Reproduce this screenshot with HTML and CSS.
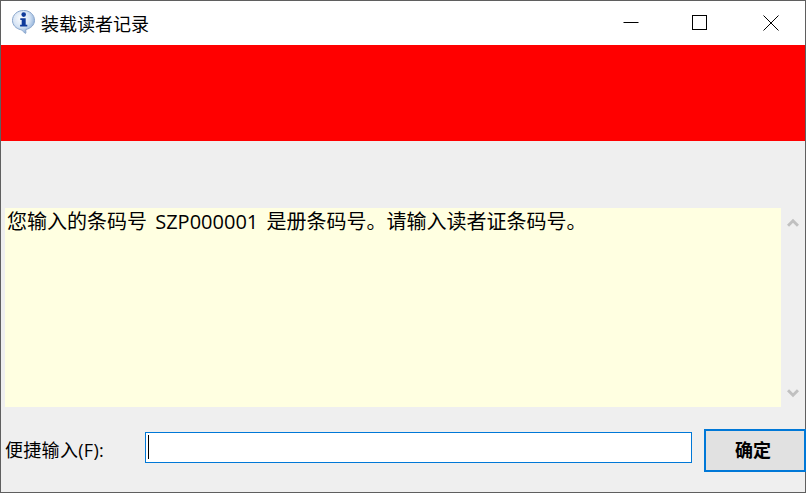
FILE: index.html
```html
<!DOCTYPE html>
<html lang="zh-CN">
<head>
    <meta charset="UTF-8">
    <title>装载读者记录</title>
    <link rel="stylesheet" href="styles.css">
</head>
<body>
    <div class="window">
        <div class="titlebar">
            <svg class="app-icon" width="26" height="26" viewBox="0 1 26 26">
                <defs>
                    <radialGradient id="bubble" cx="40%" cy="35%" r="70%">
                        <stop offset="0%" stop-color="#ffffff"/>
                        <stop offset="55%" stop-color="#d5e3f4"/>
                        <stop offset="100%" stop-color="#7fa5d4"/>
                    </radialGradient>
                </defs>
                <path d="M12.500 1.500C6.300 1.500 1.500 5.800 1.500 11.300c0 4.600 3.300 8.300 8 9.300 1 .2 2.600 1.400 4.200 3.400.6.7 1.300.4 1.200-.5-.1-1-.2-2.200-.1-3 5-1 8.700-4.600 8.700-9.200 0-5.500-4.800-9.800-10.500-9.800z" fill="url(#bubble)" stroke="#8aa6cc" stroke-width="1"/>
                <circle cx="12.700" cy="5.600" r="2.300" fill="#0f3a9a"/>
                <path d="M9.300 9.200h5.400v6.600h1.600v1.800H9.100v-1.800h1.600v-4.800H9.300z" fill="#0f3a9a"/>
            </svg>
            <span class="title">装载读者记录</span>
            <div class="window-buttons">
                <svg class="win-btn" width="16" height="16" viewBox="0 0 16 16"><path d="M0.500 7.500h15" stroke="#000" fill="none"/></svg>
                <svg class="win-btn" width="16" height="16" viewBox="0 0 16 16"><rect x="0.500" y="0.500" width="14" height="14" stroke="#000" fill="none"/></svg>
                <svg class="win-btn win-close" width="16" height="16" viewBox="0 0 16 16"><path d="M0.500 0.500l15 15M15.500 0.500l-15 15" stroke="#000" fill="none"/></svg>
            </div>
        </div>

        <div class="banner"></div>

        <div class="message-row">
            <div class="message">您输入的条码号 SZP000001 是册条码号。请输入读者证条码号。</div>
            <div class="scrollbar">
                <svg width="12" height="9" viewBox="0 0 12 9"><path d="M1 7.800l5-5 5 5" stroke="#c0c0c0" stroke-width="3" fill="none"/></svg>
                <svg width="12" height="9" viewBox="0 0 12 9"><path d="M1 1.200l5 5 5-5" stroke="#c0c0c0" stroke-width="3" fill="none"/></svg>
            </div>
        </div>

        <div class="input-row">
            <label class="input-label" for="quickInput">便捷输入(F):</label>
            <div class="input-box">
                <input type="text" id="quickInput">
                <span class="caret"></span>
            </div>
            <button class="ok-button">确定</button>
        </div>
    </div>
</body>
</html>
```

FILE: styles.css
```css
* {
    margin: 0;
    padding: 0;
    box-sizing: border-box;
}

body {
    width: 806px;
    height: 493px;
    overflow: hidden;
    font-family: "Open Sans", "Noto Sans CJK SC", sans-serif;
    color: #000;
}

.window {
    width: 806px;
    height: 493px;
    display: flex;
    flex-direction: column;
    background: #efefef;
    border: 1px solid #5f5f5f;
}

.titlebar {
    height: 44px;
    flex: none;
    display: flex;
    align-items: center;
    background: #fff;
    padding-left: 10px;
}

.app-icon {
    margin-right: 4px;
}

.title {
    font-size: 18px;
}

.window-buttons {
    margin-left: auto;
    display: flex;
    gap: 53px;
    padding-right: 26px;
}

.win-btn {
    display: block;
}

.win-close {
    margin-left: 2px;
}

.banner {
    height: 96px;
    flex: none;
    background: #f00;
}

.message-row {
    display: flex;
    height: 199px;
    flex: none;
    margin-top: 67px;
    padding-left: 4px;
}

.message {
    width: 776px;
    background: #ffffe1;
    padding: 2px;
    font-size: 20px;
    line-height: 23px;
    word-spacing: 3px;
}

.scrollbar {
    flex: 1;
    display: flex;
    flex-direction: column;
    justify-content: space-between;
    align-items: center;
    padding: 10px 0 9px;
}

.scrollbar svg {
    display: block;
}

.input-row {
    display: flex;
    align-items: flex-start;
    margin-top: 22px;
    padding-left: 4px;
}

.input-label {
    width: 140px;
    flex: none;
    font-size: 18px;
    line-height: 24px;
    margin-top: 9px;
    letter-spacing: 0.3px;
}

.input-box {
    position: relative;
    width: 547px;
    height: 31px;
    margin-top: 3px;
    flex: none;
}

.input-box input {
    width: 100%;
    height: 100%;
    border: 1px solid #0078d7;
    background: #fff;
    outline: none;
}

.caret {
    position: absolute;
    left: 3px;
    top: 3px;
    width: 1px;
    height: 24px;
    background: #000;
}

.ok-button {
    width: 102px;
    height: 43px;
    margin-left: 12px;
    padding: 0 4px 3px 0;
    flex: none;
    border: 2px solid #0078d7;
    background: #e1e1e1;
    font-family: inherit;
    font-size: 18px;
    font-weight: bold;
    color: #000;
}
```
